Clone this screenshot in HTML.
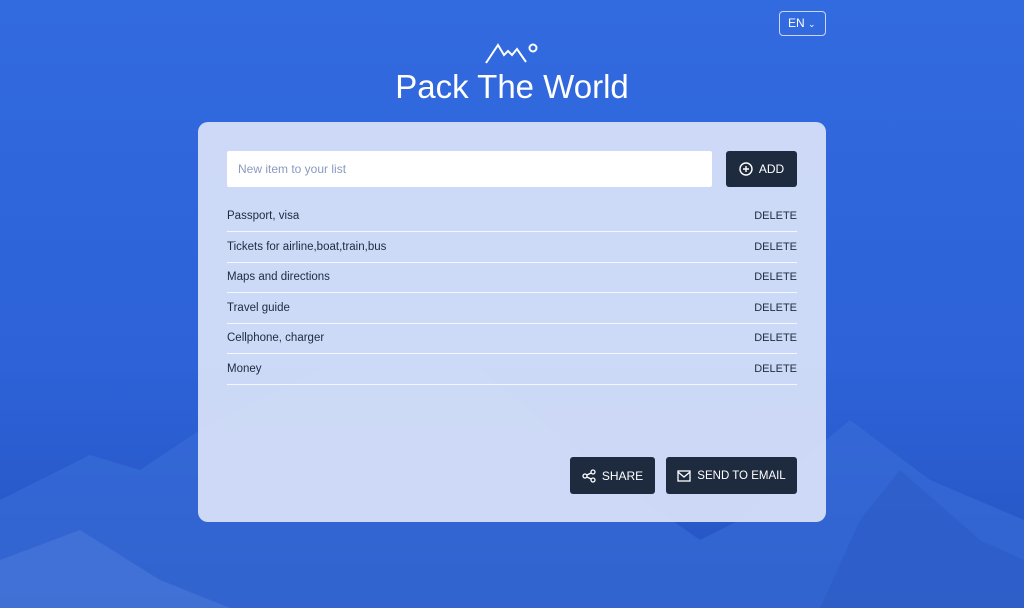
<!DOCTYPE html>
<html><head><style>
*{margin:0;padding:0;box-sizing:border-box}
body{width:1024px;height:608px;overflow:hidden;font-family:"Liberation Sans",sans-serif;background:linear-gradient(#326ae0,#2d62d8 60%,#2654c0);position:relative}
.mt{position:absolute;left:0;top:0}
.en{position:absolute;left:779px;top:11px;width:47px;height:25px;border:1px solid #c9d6f5;border-radius:4px;color:#fff;font-size:12px;line-height:23px;padding-left:8px}
h1{position:absolute;left:0;width:1024px;top:68px;text-align:center;color:#fff;font-weight:normal;font-size:33px}
.card{position:absolute;left:198px;top:122px;width:628px;height:400px;background:rgba(226,233,250,0.88);border-radius:10px}
.inp{position:absolute;left:29px;top:29px;width:485px;height:36px;background:#fff;border-radius:2px;color:#8a9ac0;font-size:12px;line-height:36px;padding-left:11px}
.btn{position:absolute;background:#1e2b3f;color:#fff;font-size:12px;border-radius:3px;display:flex;align-items:center;justify-content:center;gap:6px}
.row{position:absolute;left:29px;width:570px;height:31px;border-bottom:1px solid #f4f7fd;font-size:11.5px;color:#1e2b3f;line-height:30px}
.row span{position:absolute;right:0;font-size:11px}
</style></head><body>
<svg class="mt" width="1024" height="608">
<polygon points="0,608 0,500 90,455 140,470 200,430 300,380 395,325 470,360 600,470 700,540 740,520 790,470 850,420 930,480 1024,520 1024,608" fill="#3a6ed8" opacity="0.6"/>
<polygon points="0,608 0,560 80,530 160,580 230,608" fill="#4f7edc" opacity="0.5"/>
<polygon points="820,608 860,520 900,470 980,540 1024,560 1024,608" fill="#2a58c2" opacity="0.5"/>
</svg>
<div class="en">EN <span style="font-size:9px">⌄</span></div>
<svg style="position:absolute;left:484px;top:41px" width="58" height="24" fill="none" stroke="#fff" stroke-width="2"><path d="M2,22 L14,4 L20,14 L24,10 L28,14 L33,8 L42,21"/><circle cx="49" cy="7" r="3.5"/></svg>
<h1>Pack The World</h1>
<div class="card">
<div class="inp">New item to your list</div>
<div class="btn" style="left:528px;top:29px;width:71px;height:36px"><svg width="14" height="14" fill="none" stroke="#fff" stroke-width="1.4"><circle cx="7" cy="7" r="6"/><path d="M7,4V10M4,7H10"/></svg>ADD</div>
<div class="row" style="top:79px">Passport, visa<span>DELETE</span></div>
<div class="row" style="top:110px">Tickets for airline,boat,train,bus<span>DELETE</span></div>
<div class="row" style="top:140px">Maps and directions<span>DELETE</span></div>
<div class="row" style="top:171px">Travel guide<span>DELETE</span></div>
<div class="row" style="top:201px">Cellphone, charger<span>DELETE</span></div>
<div class="row" style="top:232px">Money<span>DELETE</span></div>
<div class="btn" style="left:372px;top:335px;width:85px;height:37px"><svg width="14" height="14" fill="none" stroke="#fff" stroke-width="1.3"><circle cx="3" cy="7" r="2"/><circle cx="11" cy="3" r="2"/><circle cx="11" cy="11" r="2"/><path d="M5,6L9,4M5,8L9,10"/></svg>SHARE</div>
<div class="btn" style="left:468px;top:335px;width:131px;height:37px;font-size:11.5px"><svg width="14" height="12" fill="none" stroke="#fff" stroke-width="1.3"><rect x="1" y="1" width="12" height="10"/><path d="M1,2L7,7L13,2"/></svg>SEND TO EMAIL</div>
</div>
</body></html>
